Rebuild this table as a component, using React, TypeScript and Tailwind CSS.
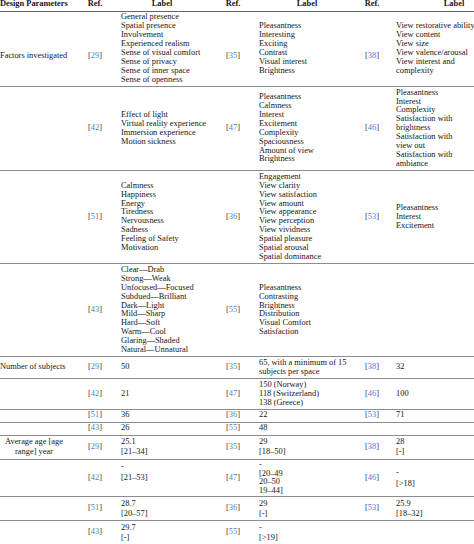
import React from 'react';

type Row = {
  param?: React.ReactNode;
  r1?: string;
  l1: string[];
  r2?: string;
  l2: string[];
  r3?: string;
  l3: string[];
  lead?: string;
  shift?: boolean;
  c3?: string;
  c5?: string;
  c7?: string;
};

const rows: Row[] = [
  {
    param: 'Factors investigated',
    r1: '29',
    l1: [
      'General presence',
      'Spatial presence',
      'Involvement',
      'Experienced realism',
      'Sense of visual comfort',
      'Sense of privacy',
      'Sense of inner space',
      'Sense of openness',
    ],
    r2: '35',
    l2: ['Pleasantness', 'Interesting', 'Exciting', 'Contrast', 'Visual interest', 'Brightness'],
    r3: '38',
    l3: [
      'View restorative ability',
      'View content',
      'View size',
      'View valence/arousal',
      'View interest and',
      'complexity',
    ],
    shift: true,
  },
  {
    r1: '42',
    l1: ['Effect of light', 'Virtual reality experience', 'Immersion experience', 'Motion sickness'],
    r2: '47',
    l2: [
      'Pleasantness',
      'Calmness',
      'Interest',
      'Excitement',
      'Complexity',
      'Spaciousness',
      'Amount of view',
      'Brightness',
    ],
    r3: '46',
    l3: [
      'Pleasantness',
      'Interest',
      'Complexity',
      'Satisfaction with',
      'brightness',
      'Satisfaction with',
      'view out',
      'Satisfaction with',
      'ambiance',
    ],
  },
  {
    r1: '51',
    l1: [
      'Calmness',
      'Happiness',
      'Energy',
      'Tiredness',
      'Nervousness',
      'Sadness',
      'Feeling of Safety',
      'Motivation',
    ],
    r2: '36',
    l2: [
      'Engagement',
      'View clarity',
      'View satisfaction',
      'View amount',
      'View appearance',
      'View perception',
      'View vividness',
      'Spatial pleasure',
      'Spatial arousal',
      'Spatial dominance',
    ],
    r3: '53',
    l3: ['Pleasantness', 'Interest', 'Excitement'],
  },
  {
    r1: '43',
    l1: [
      'Clear—Drab',
      'Strong—Weak',
      'Unfocused—Focused',
      'Subdued—Brilliant',
      'Dark—Light',
      'Mild—Sharp',
      'Hard—Soft',
      'Warm—Cool',
      'Glaring—Shaded',
      'Natural—Unnatural',
    ],
    r2: '55',
    l2: ['Pleasantness', 'Contrasting', 'Brightness', 'Distribution', 'Visual Comfort', 'Satisfaction'],
    l3: [],
  },
  {
    param: 'Number of subjects',
    r1: '29',
    l1: ['50'],
    r2: '35',
    l2: ['65, with a minimum of 15', 'subjects per space'],
    r3: '38',
    l3: ['32'],
  },
  {
    r1: '42',
    l1: ['21'],
    r2: '47',
    l2: ['150 (Norway)', '118 (Switzerland)', '138 (Greece)'],
    r3: '46',
    l3: ['100'],
  },
  { r1: '51', l1: ['36'], r2: '36', l2: ['22'], r3: '53', l3: ['71'] },
  { r1: '43', l1: ['26'], r2: '55', l2: ['48'], l3: [] },
  {
    param: (
      <div className="w-[68px] text-center">
        Average age [age
        <br />
        range] year
      </div>
    ),
    r1: '29',
    l1: ['25.1', '[21–34]'],
    r2: '35',
    l2: ['29', '[18–50]'],
    r3: '38',
    l3: ['28', '[-]'],
    lead: 'leading-[10px]',
  },
  {
    r1: '42',
    l1: ['-', '[21–53]'],
    r2: '47',
    l2: ['-', '[20–49', '20–50', '19–44]'],
    r3: '46',
    l3: ['-', '[>18]'],
    c3: 'align-top leading-[11px]',
    c5: 'leading-[8.4px]',
    c7: 'leading-[11px]',
  },
  {
    r1: '51',
    l1: ['28.7', '[20–57]'],
    r2: '36',
    l2: ['29', '[-]'],
    r3: '53',
    l3: ['25.9', '[18–32]'],
    lead: 'leading-[10px]',
  },
  {
    r1: '43',
    l1: ['29.7', '[-]'],
    r2: '55',
    l2: ['-', '[>19]'],
    l3: [],
    lead: 'leading-[10px]',
  },
];

function Ref({ n }: { n?: string }) {
  if (!n) return null;
  return (
    <span className="text-[#333]">
      [<span className="text-[#4d7fcf]">{n}</span>]
    </span>
  );
}

function Lines({ items }: { items: string[] }) {
  return (
    <>
      {items.map((t, i) => (
        <div key={i} className="whitespace-nowrap">
          {t}
        </div>
      ))}
    </>
  );
}

export default function App() {
  const cell = 'border-b border-[#8c8c8c] py-[1.5px] align-middle';
  const head = 'border-b border-[#666] pt-0 pb-[2px]';
  return (
    <div
      className="w-[474px] h-[544px] overflow-hidden bg-white text-[#161616] text-[8.4px] leading-[8.9px]"
      style={{ fontFamily: '"Liberation Serif", "Times New Roman", serif' }}
    >
      <table className="table-fixed border-collapse w-[526px]">
        <colgroup>
          <col className="w-[80px]" />
          <col className="w-[30px]" />
          <col className="w-[104px]" />
          <col className="w-[38px]" />
          <col className="w-[110px]" />
          <col className="w-[20px]" />
          <col className="w-[144px]" />
        </colgroup>
        <thead>
          <tr className="font-bold">
            <th className={`${head} text-left whitespace-nowrap`}>Design Parameters</th>
            <th className={`${head} text-center`}>Ref.</th>
            <th className={`${head} text-center`}>Label</th>
            <th className={`${head} text-center`}>Ref.</th>
            <th className={`${head} text-center`}>Label</th>
            <th className={`${head} text-center`}>Ref.</th>
            <th className={`${head} text-center`}>Label</th>
          </tr>
        </thead>
        <tbody>
          {rows.map((r, i) => {
            const side = r.shift ? 'pt-[17px]' : '';
            const lead = r.lead ?? '';
            return (
              <tr key={i}>
                <td className={`${cell} ${side} ${lead} text-left whitespace-nowrap`}>{r.param}</td>
                <td className={`${cell} ${side} text-center`}>
                  <Ref n={r.r1} />
                </td>
                <td className={`${cell} ${lead} pl-[11px] ${r.c3 ?? ''}`}>
                  <Lines items={r.l1} />
                </td>
                <td className={`${cell} ${side} text-center`}>
                  <Ref n={r.r2} />
                </td>
                <td className={`${cell} ${lead} pl-[7px] ${r.c5 ?? ''}`}>
                  <Lines items={r.l2} />
                </td>
                <td className={`${cell} ${side} text-center`}>
                  <Ref n={r.r3} />
                </td>
                <td className={`${cell} ${lead} pl-[14px] ${r.c7 ?? ''}`}>
                  <Lines items={r.l3} />
                </td>
              </tr>
            );
          })}
        </tbody>
      </table>
    </div>
  );
}
